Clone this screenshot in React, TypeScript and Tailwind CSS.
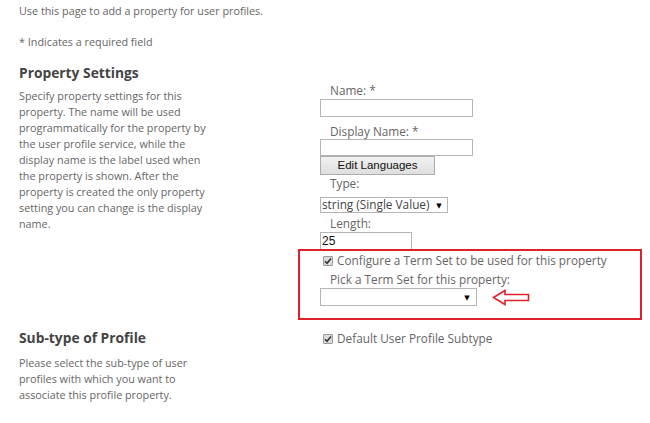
const body = "font-['Open_Sans',_'DejaVu_Sans',_sans-serif]";

function Check() {
  return (
    <span className="inline-flex items-center justify-center w-[10px] h-[10px] border border-[#9a9a9a] bg-[#dcdcdc] rounded-[1px] shrink-0">
      <svg width="8" height="8" viewBox="0 0 8 8">
        <path d="M1 4.2 L3 6.3 L7 1.5" fill="none" stroke="#333" strokeWidth="1.6" />
      </svg>
    </span>
  );
}

function Arrow() {
  return (
    <span className="inline-flex items-center justify-center w-[8px] text-[7px] leading-none text-black">▼</span>
  );
}

export default function App() {
  return (
    <main className={`w-[650px] h-[423px] bg-white text-[#666] text-[10.8px] ${body} overflow-hidden`}>
      <div className="pl-[19px]">
        <p className="mt-[3px] leading-[16px]">Use this page to add a property for user profiles.</p>
        <p className="mt-[15px] leading-[16px]">* Indicates a required field</p>

        {/* Property Settings */}
        <section className="mt-[13px] grid grid-cols-[301px_1fr]">
          <div>
            <h2 className="text-[13.8px] leading-[20px] font-bold text-[#444]">Property Settings</h2>
            <p className="mt-[5px] leading-[16px] whitespace-nowrap">
              Specify property settings for this<br />
              property. The name will be used<br />
              programmatically for the property by<br />
              the user profile service, while the<br />
              display name is the label used when<br />
              the property is shown. After the<br />
              property is created the only property<br />
              setting you can change is the display<br />
              name.
            </p>
          </div>

          <div className="pt-[20px] flex flex-col items-start text-[11.8px]">
            <label className="pl-[10px] leading-[14px]">Name: *</label>
            <div className="mt-[2px] w-[153px] h-[18px] border border-[#b5b5b5] bg-white" />
            <label className="mt-[7px] pl-[10px] leading-[14px]">Display Name: *</label>
            <div className="mt-[1px] w-[153px] h-[17px] border border-[#b5b5b5] bg-white" />
            <button className="w-[115px] h-[19px] border border-[#acacac] bg-gradient-to-b from-[#f2f2f2] to-[#dedede] text-[11.5px] leading-none text-[#111] font-['Liberation_Sans',_sans-serif]">
              Edit Languages
            </button>
            <label className="mt-[1px] pl-[10px] leading-[14px]">Type:</label>
            <div className="mt-[7px] w-[128px] h-[16px] border border-[#b5b5b5] bg-white flex items-center justify-between pl-[1px] pr-[4px] text-[#444]">
              <span className="leading-none">string (Single Value)</span>
              <Arrow />
            </div>
            <label className="mt-[3px] pl-[10px] leading-[14px]">Length:</label>
            <div className="mt-[2px] w-[92px] h-[18px] border border-[#b5b5b5] bg-white flex items-center pl-[1px] text-[12px] text-[#111] font-['Liberation_Sans',_sans-serif]">
              25
            </div>

            <div className="-mt-[1px] -ml-[22px] w-[344px] h-[71px] border-2 border-[#e0202b] pl-[20px]">
              <div className="h-[20px] flex items-center gap-[4px] pl-[3px]">
                <Check />
                <span>Configure a Term Set to be used for this property</span>
              </div>
              <p className="pl-[10px] h-[16px] leading-[16px]">Pick a Term Set for this property:</p>
              <div className="mt-[1px] flex items-center">
                <div className="w-[157px] h-[18px] border border-[#b5b5b5] bg-white flex items-center justify-end pr-[5px]">
                  <Arrow />
                </div>
                <svg className="ml-[15px]" width="38" height="17" viewBox="0 0 38 17">
                  <path d="M1.5 8.5 L13 1.5 L13 5.5 L36.5 5.5 L36.5 11.5 L13 11.5 L13 15.5 Z" fill="white" stroke="#e0202b" strokeWidth="1.6" strokeLinejoin="miter" />
                </svg>
              </div>
            </div>
          </div>
        </section>

        {/* Sub-type of Profile */}
        <section className="mt-[8px] grid grid-cols-[301px_1fr]">
          <div>
            <h2 className="text-[13.8px] leading-[20px] font-bold text-[#444]">Sub-type of Profile</h2>
            <p className="mt-[7px] leading-[16px] whitespace-nowrap">
              Please select the sub-type of user<br />
              profiles with which you want to<br />
              associate this profile property.
            </p>
          </div>
          <div className="pt-[3px] text-[11.8px]">
            <div className="h-[16px] flex items-center gap-[4px] pl-[3px]">
              <Check />
              <span>Default User Profile Subtype</span>
            </div>
          </div>
        </section>
      </div>
    </main>
  );
}
